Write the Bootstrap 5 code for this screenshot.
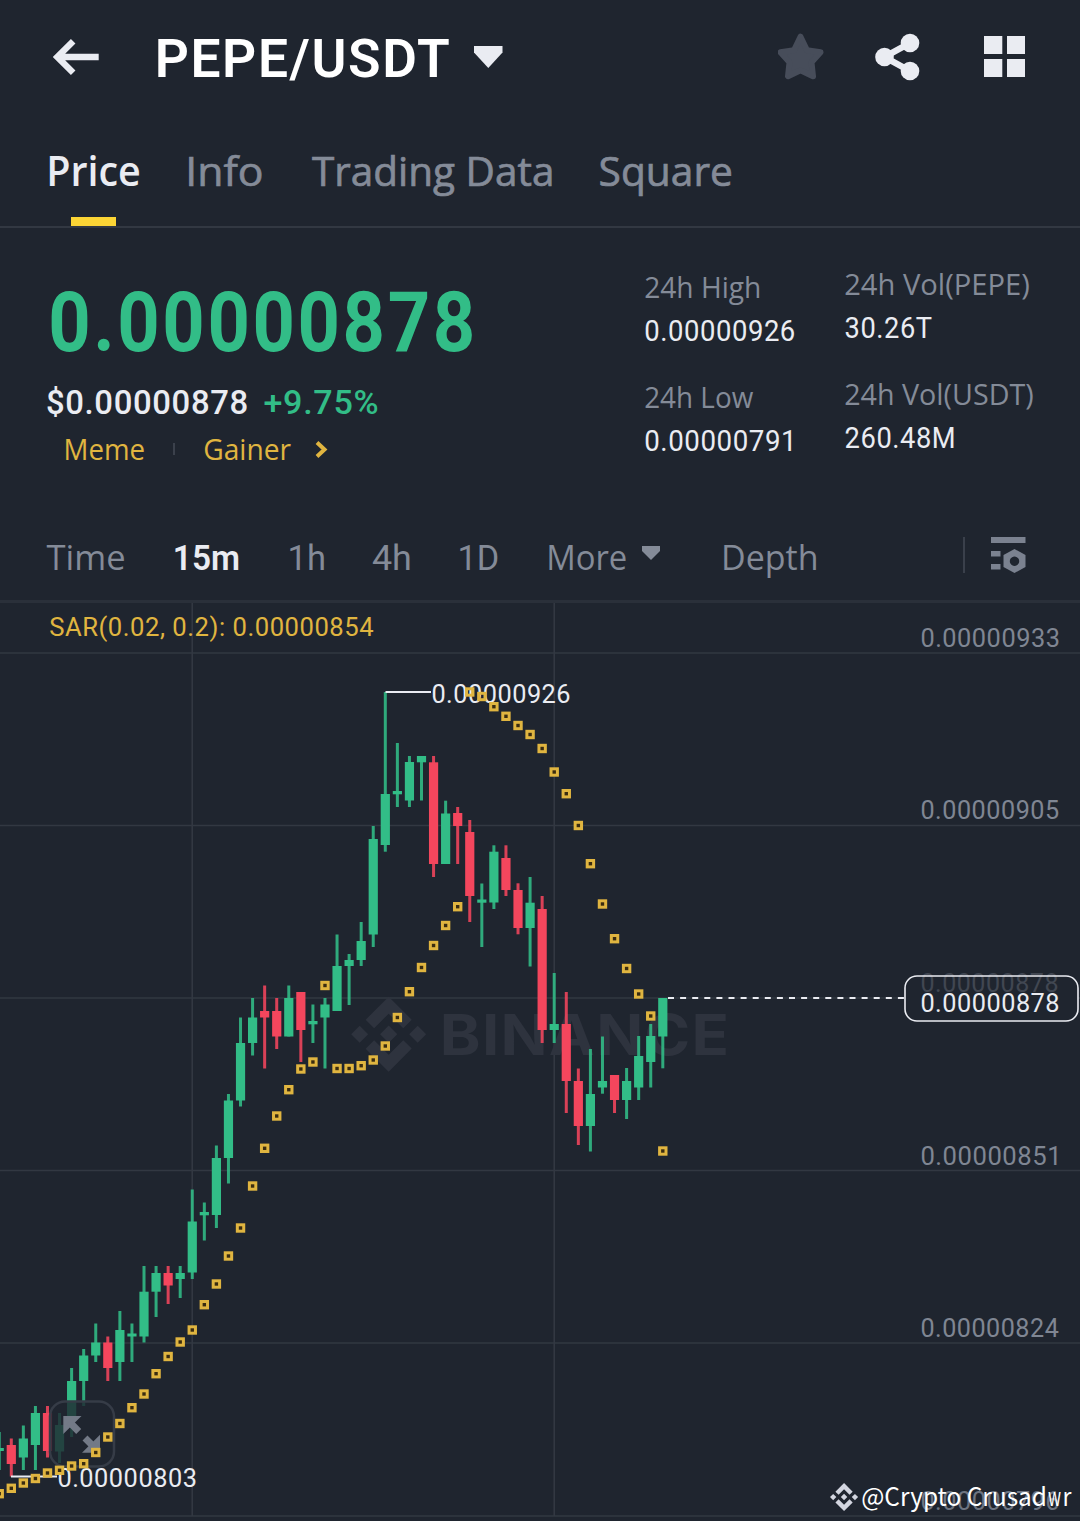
<!DOCTYPE html>
<html lang="en">
<head>
<meta charset="utf-8">
<meta name="viewport" content="width=device-width, initial-scale=1">
<title>PEPE/USDT</title>
<link href="https://cdn.jsdelivr.net/npm/bootstrap@5.3.0/dist/css/bootstrap.min.css" rel="stylesheet">
<style>
  :root { --ink:#1f252f; --line:#323842; --dim:#848b98; --lite:#eaecf2; --up:#32bd87; --down:#f4465d; --gold:#e0b540; }
  body { background:var(--ink); color:var(--lite); font-family:Roboto,"Liberation Sans",sans-serif; width:1080px; height:1521px; overflow:hidden; }
  svg { display:block; flex:none; }
  .plex { font-family:"Open Sans","Noto Sans",sans-serif; }
  .fit { display:block; flex:none; white-space:nowrap; transform-origin:0 50%; }
  .dim { color:var(--dim); } .up { color:var(--up); } .gold { color:var(--gold); }
  .topbar { height:113px; padding-left:53px; padding-right:54px; }
  .pair { font-size:53.5px; font-weight:600; line-height:60px; color:#fff; margin-left:58.3px; padding-top:4px; letter-spacing:.03em; }
  .tabs { height:115px; border-bottom:2px solid var(--line); padding-left:47.5px; gap:46.8px; font-size:41px; line-height:56px; }
  .tabs .fw-medium { -webkit-text-stroke:.7px var(--dim); }
  .tabs .tab-on { position:relative; height:113px; }
  .tabs .tab-on::after { content:""; position:absolute; left:23.5px; bottom:0; width:45px; height:9px; background:#fcd535; }
  .summary { height:286px; }
  .quote-col { width:644.5px; padding:55px 0 0 46.5px; }
  .last { font-size:82.5px; line-height:80px; font-weight:700; letter-spacing:.035em; margin-left:3.5px; }
  .fiat { font-size:33.5px; line-height:40px; font-weight:500; margin-top:20px; gap:17px; letter-spacing:.02em; }
  .tags { font-size:28.7px; line-height:40px; margin-top:6px; padding-left:18px; }
  .tag-sep { width:2px; height:12px; background:#3b414c; margin:0 28.5px; }
  .stat-a { width:200px; padding-top:38px; } .stat-b { padding-top:34.5px; }
  .stat { height:110px; }
  .stat .plex { font-size:29.2px; line-height:42px; }
  .stat .val { font-size:29px; line-height:42px; margin-top:2px; letter-spacing:.02em; }
  .ranges { height:89px; border-bottom:3px solid #2a303a; padding:0 54px 0 46px; font-size:35px; line-height:44px; }
  .ranges .rb { padding-top:3px; }
  .ranges .vsep { width:2px; height:36px; background:#3a404b; margin-right:26px; margin-bottom:4px; }
  .chart text { font-family:Roboto,"Liberation Sans",sans-serif; font-size:26px; letter-spacing:.02em; }
</style>
<script src="https://cdn.jsdelivr.net/npm/bootstrap@5.3.0/dist/js/bootstrap.bundle.min.js"></script>
</head>
<body>
<header class="topbar d-flex align-items-center">
  <svg width="46" height="38" viewBox="53 37.500 46 38"><path d="M98.700 56.500H58M73.200 40.700 57.400 56.500 73.200 72.300" fill="none" stroke="#eaecf2" stroke-width="6.400"/></svg>
  <h1 class="pair fit mb-0" data-w="293.5" data-side="1">PEPE/USDT</h1>
  <svg width="29" height="22" viewBox="0 0 29 22" style="margin-left:23.500px"><path d="M0 0h28.500v6.500L14.300 22 0 6.500z" fill="#eaecf2"/></svg>
  <div class="d-flex align-items-center ms-auto">
    <svg width="46" height="47" viewBox="778 33.300 46 47"><path d="M800.500 37 807 50.500 820.500 52.500 811.500 62.500 813 76.500 800.500 70.500 788 76.500 789.500 62.500 780.500 52.500 794 50.500z" fill="#474d5a" stroke="#474d5a" stroke-width="6" stroke-linejoin="round"/></svg>
    <svg width="45" height="48" viewBox="875 32.500 45 48" style="margin-left:51.500px"><path d="M910 42.500 884.500 56.500 910 70.500" fill="none" stroke="#eaecf2" stroke-width="6.500"/><g fill="#eaecf2"><circle cx="910" cy="42.500" r="9.300"/><circle cx="884.500" cy="56.500" r="9.300"/><circle cx="910" cy="70.500" r="9.300"/></g></svg>
    <svg width="42" height="41" viewBox="984 36 42 41" style="margin-left:64px"><path d="M984 36h18.300v18H984zM1007 36h18v18h-18zM984 59h18.300v18H984zM1007 59h18v18h-18z" fill="#eaecf2"/></svg>
  </div>
</header>

<nav class="tabs plex dim d-flex align-items-center">
  <div class="tab-on d-flex align-items-center"><span class="fit fw-semibold" style="color:#eaecf2" data-w="93" data-side="2">Price</span></div>
  <span class="fit fw-medium" data-w="76.5" data-side="2.2">Info</span>
  <span class="fit fw-medium" data-w="241.5" data-side="1">Trading Data</span>
  <span class="fit fw-medium" data-w="133.5" data-side="1.5">Square</span>
</nav>

<section class="summary d-flex">
  <div class="quote-col">
    <div class="last up fit" data-w="422.5">0.00000878</div>
    <div class="fiat d-flex"><span class="fit" data-w="200.5">$0.00000878</span><span class="fit up" data-w="114">+9.75%</span></div>
    <div class="tags plex gold d-flex align-items-center">
      <span class="fit" data-w="80" data-side="1.2">Meme</span><i class="tag-sep"></i><span class="fit" data-w="87.5">Gainer</span>
      <svg width="13" height="17" viewBox="0 0 13 17" style="margin-left:24px"><path d="M2 1.500 9.500 8.500 2 15.500" fill="none" stroke="#e0b540" stroke-width="4"/></svg>
    </div>
  </div>
  <div class="stat-a">
    <div class="stat"><div class="plex dim fit" data-w="115">24h High</div><div class="val fit" data-w="149.5">0.00000926</div></div>
    <div class="stat"><div class="plex dim fit" data-w="108.5">24h Low</div><div class="val fit" data-w="146.5">0.00000791</div></div>
  </div>
  <div class="stat-b">
    <div class="stat"><div class="plex dim fit" data-w="184.5">24h Vol(PEPE)</div><div class="val fit" data-w="87">30.26T</div></div>
    <div class="stat"><div class="plex dim fit" data-w="188.5">24h Vol(USDT)</div><div class="val fit" data-w="109">260.48M</div></div>
  </div>
</section>

<div class="ranges d-flex align-items-center dim">
  <span class="fit plex" data-w="78.5">Time</span>
  <span class="fit rb fw-semibold" style="color:#eaecf2;margin-left:49.5px" data-w="65.5" data-side="1.5">15m</span>
  <span class="fit rb" style="margin-left:49.5px" data-w="36" data-side="1.3">1h</span>
  <span class="fit rb" style="margin-left:47px" data-w="38">4h</span>
  <span class="fit rb" style="margin-left:49px" data-w="40" data-side="1.3">1D</span>
  <span class="fit plex" style="margin-left:49px" data-w="79" data-side="1.3">More</span>
  <svg width="18" height="14" viewBox="0 0 18 14" style="margin-left:15px;margin-bottom:8px"><path d="M0 0h18v5L9 14 0 5z" fill="#848b98"/></svg>
  <span class="fit plex" style="margin-left:62.5px" data-w="94.5" data-side="1.3">Depth</span>
  <i class="vsep ms-auto"></i>
  <svg width="35" height="36" viewBox="991 537 35 36" style="margin-bottom:4px"><path fill="#7b8290" fill-rule="evenodd" d="M991 537h34.500v6H991zM991 551h9.500v5.500H991zM991 564h9.500v5.500H991zM1014.500 549l11 6v12l-11 6-11-6v-12zM1014.500 556.500a4.700 4.700 0 1 0 .01 0z"/></svg>
</div>

<svg class="chart" id="chart" width="1080" height="918" viewBox="0 603 1080 918"></svg>

<script>
const chart = document.getElementById('chart');
const add = (tag, attrs, text) => {
  const e = document.createElementNS('http://www.w3.org/2000/svg', tag);
  for (const k in attrs) e.setAttribute(k, attrs[k]);
  if (text) e.textContent = text;
  return chart.appendChild(e);
};
const ctx = document.createElement('canvas').getContext('2d');
// Ink extent of an element's text, relative to its pen origin; measured at ten times the size for precision
function ink(el, side) {
  const s = getComputedStyle(el);
  ctx.font = `${s.fontWeight} ${parseFloat(s.fontSize) * 10}px ${s.fontFamily}`;
  ctx.letterSpacing = (parseFloat(s.letterSpacing) || 0) * 10 + 'px';
  const m = ctx.measureText(el.textContent);
  return [-m.actualBoundingBoxLeft / 10 - side, m.actualBoundingBoxRight / 10 + side];
}
function label(text, x1, x2, y, fill, style) {
  const e = add('text', { fill, style: style || '' }, text);
  const [a, b] = ink(e, .6), k = (x2 - x1) / (b - a);
  e.setAttribute('transform', `translate(${x1 - a * k} ${y}) scale(${k} 1)`);
}
const step = 12.065, right = 662.8, UP = '#32bd87', DOWN = '#f4465d', GOLD = '#e0b540';
const xAt = k => right - k * step;

// Grid
for (const y of [653, 825.5, 998, 1170.5, 1343, 1516]) add('path', { d: `M0 ${y}H1080`, stroke: '#323842', 'stroke-width': 1.6 });
for (const x of [192.2, 554.2]) add('path', { d: `M${x} 603V1516`, stroke: '#323842', 'stroke-width': 1.6 });

// Brand mark
const MARK = 'M38.730 53.200 63.320 28.620 87.920 53.220 102.220 38.910 63.320 0 24.420 38.900zM0 63.310 14.300 49 28.610 63.310 14.300 77.610zM38.730 73.410 63.320 98 87.920 73.400 102.230 87.690 63.320 126.600 24.420 87.720zM98 63.310 112.300 49 126.610 63.300 112.300 77.620zM77.830 63.300 63.320 48.780 48.810 63.280 63.320 77.780z';
add('path', { d: MARK, fill: '#2e333e', transform: 'translate(351.200 996.700) scale(.592)' });
label('BINANCE', 443, 727, 1055, '#2e333e', 'font-family:Inter,sans-serif;font-weight:700;font-size:56px;letter-spacing:.02em');

// Axis prices
const axis = [['0.00000933',1059,646.5],['0.00000905',1059,819],['0.00000851',1057,1164.5],['0.00000824',1059,1337]];
for (const [t, x, y] of axis) label(t, 921, x, y, '#7f8693');

// Candles, newest first: direction, high, low, body top, body bottom
const candles = [
[1,998,1068.3,998,1036.5],[1,1024,1087.5,1036,1062],[1,1036,1100,1056,1087.5],[1,1068,1119,1081,1100],[0,1075,1113,1075,1100],
[1,1036.5,1093.7,1081,1087.5],[1,1049,1151.5,1094,1126],[0,1068.5,1145,1081,1126],[0,992,1113,1024,1081],[1,973,1043,1024,1030],
[0,896,1043,909,1030],[1,877,966.5,902.7,928],[0,883.3,934.3,890,928],[0,845.3,896,858,890],[1,845.3,909,851.7,902.5],
[1,883.5,947,899.5,902.7],[0,820,922,832,896],[0,807,864,813,826],[1,800.7,864,813.5,864],[0,756,877,762.3,864],
[1,756,800.5,756,762.3],[1,756,807,762,800.5],[1,743,807,791,794.3],[1,692,851.7,794,845],[1,826,947,839,934.5],
[1,922,966,941,960],[1,954,1005,960,966],[1,934.5,1011,966,1011],[1,998,1068.5,1004.5,1017.5],[1,1004.5,1043,1021,1024.3],
[0,992,1062,992,1030],[1,985.5,1036.5,998,1036.5],[0,998,1049,1011,1036.5],[0,985.5,1068.5,1011,1017.5],[1,998,1055.5,1017.5,1043],
[1,1017.5,1106.5,1043,1100.5],[1,1094,1183.5,1100.5,1158],[1,1145.5,1228,1158,1215],[1,1202.5,1240.5,1212,1215.3],[1,1189.5,1279,1221.5,1272.5],
[1,1266,1298,1273,1279],[0,1266,1304,1273,1285.5],[1,1266,1317,1273,1291.7],[1,1266,1342.5,1291.7,1336.5],[1,1323.5,1362,1333.5,1336.5],
[1,1311,1381,1330,1362],[0,1336.5,1381,1342.5,1368],[1,1323.5,1362,1342.5,1355.5],[1,1349,1406,1355.5,1381],[1,1368,1437,1381,1419],
[1,1413,1463,1425,1451.5],[0,1406,1457.5,1413,1451],[1,1406,1470,1413,1445],[1,1425.5,1470,1438.5,1457.5],[0,1438.5,1476.5,1445,1464],
[1,1432,1470,1448,1451]];
candles.forEach(([up, hi, lo, top, bot], k) => {
  const x = xAt(k), c = up ? UP : DOWN;
  add('rect', { x: x - 1.5, y: hi, width: 3, height: lo - hi, fill: c, opacity: .88 });
  add('rect', { x: x - 4.6, y: top, width: 9.2, height: bot - top, fill: c });
});

// Full-screen button
add('rect', { x: 50, y: 1401.5, width: 64, height: 65, rx: 15, fill: '#1f252f', 'fill-opacity': .8, stroke: '#363c47', 'stroke-width': 2.5 });
add('path', { d: 'M63.300 1416H81.500L63.300 1434zM100 1452.700H82L100 1434.700z', fill: '#737a87' });
add('path', { d: 'M69 1421.500 78.700 1431.500M85 1438 95 1448', stroke: '#737a87', 'stroke-width': 7 });

// High and low markers
add('path', { d: 'M385.500 692H431M11 1476.500H57', stroke: '#eaecf2', 'stroke-width': 1.8 });
label('0.00000926', 432, 570, 702.500, '#eaecf2');
label('0.00000803', 58, 196, 1487, '#eaecf2');

// Parabolic SAR, newest first
[1151,1016,994,968.5,938.7,904,863.7,825.5,793.7,772,748.5,734.5,725.5,716.3,706.7,696.5,692,906.7,925.5,945.5,967.5,991.7,1017.5,1046,
1060,1065.7,1068.5,1068.5,985.5,1062,1069,1089.7,1116,1148.3,1186,1228,1256,1284,1304.7,1330,1342,1356.5,1373.7,1394,1407.7,1423.5,1437,
1452.5,1463.7,1466,1470.3,1473,1478.5,1483,1488.3,1493.7].forEach((y, k) =>
  add('rect', { x: xAt(k) - 3.2, y: y - 3.2, width: 6.4, height: 6.4, fill: '#3a2c10', 'fill-opacity': k > 14 && k < 17 ? 0 : 1, stroke: GOLD, 'stroke-width': 3 }));
label('SAR(0.02, 0.2): 0.00000854', 49.500, 374, 635.700, GOLD);

// Last price
add('path', { d: 'M668 998H904', stroke: '#eaecf2', 'stroke-width': 1.8, 'stroke-dasharray': '6 6.100' });
add('rect', { x: 905, y: 976, width: 173, height: 45, rx: 12, fill: '#1f252f' });
label('0.00000878', 921, 1058, 991.500, '#414752');
add('rect', { x: 905, y: 976, width: 173, height: 45, rx: 12, fill: 'none', stroke: '#eaecf2', 'stroke-width': 1.6 });
label('0.00000878', 921, 1059, 1012, '#eaecf2');

// Author signature over the lowest axis price
label('0.00000796', 921, 1059, 1509.500, '#6d7481');
add('path', { d: MARK, fill: '#d3d6e0', transform: 'translate(830 1483) scale(.222)' });
const sig = 'font-family:"Noto Sans CJK SC",sans-serif;font-size:25px;letter-spacing:0';
label('@Crypto Crusad', 862, 1045.500, 1506, '#fff', sig);
label('w', 1048, 1061, 1506, '#fff', sig);
label('r', 1064, 1072, 1506, '#fff', sig);

// Fit each label's glyphs to its data-w width
document.querySelectorAll('.fit').forEach(el => {
  const [a, b] = ink(el, +(el.dataset.side || .5)), w = +el.dataset.w, k = w / (b - a);
  el.style.width = w + 'px';
  el.style.transform = `translateX(${-a * k}px) scaleX(${k})`;
});
</script>
</body>
</html>
